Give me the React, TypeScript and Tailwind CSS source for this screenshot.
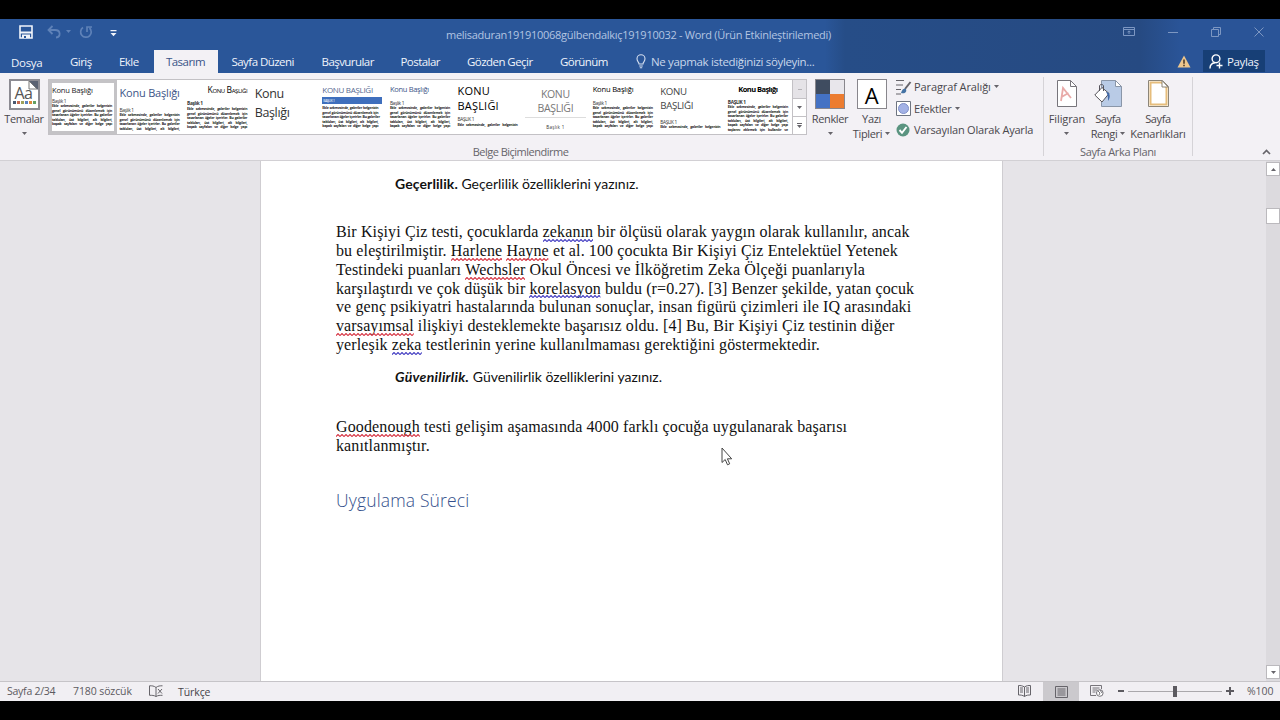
import { ReactNode } from "react";

const SAMPLE = [
  "Ekle sekmesinde, galeriler belgenizin",
  "genel görünümünü düzenlemek için",
  "tasarlanan öğeler içerirler. Bu galeriler",
  "tabloları, üst bilgileri, alt bilgileri,",
  "kapak sayfaları ve diğer belge yapı",
  "taşlarını eklemek için kullanılır ve",
];

const tabs = [
  { label: "Dosya", className: "w-[70px] pl-[11px] pt-px tracking-[-0.3px]" },
  { label: "Giriş", className: "w-[49px]" },
  { label: "Ekle", className: "w-[35px]" },
  { label: "Tasarım", className: "w-[64px] pl-3 mr-[13.5px] bg-[#f3f1f5] text-[#3a5488]" },
  { label: "Sayfa Düzeni", className: "w-[90px]" },
  { label: "Başvurular", className: "w-[79px]" },
  { label: "Postalar", className: "w-[66.5px]" },
  { label: "Gözden Geçir", className: "w-[93px]" },
  { label: "Görünüm", className: "w-[76px]" },
];

function Caret({ className = "" }: { className?: string }) {
  return (
    <svg viewBox="0 0 5 3" className={`h-[3px] w-[5px] shrink-0 ${className}`}>
      <path d="M0 0h5L2.500 3z" fill="#66646a" />
    </svg>
  );
}

function Lines({ count, className = "" }: { count: number; className?: string }) {
  return (
    <div className={`text-[3.500px] font-bold leading-[4.500px] tracking-[-0.25px] whitespace-nowrap text-[#222] ${className}`}>
      {SAMPLE.slice(0, count).map((line) => (
        <div key={line} className="[text-align-last:justify]">{line}</div>
      ))}
    </div>
  );
}

function Thumb({ title, heading, titleClass, headingClass = "", lines = 0, bodyClass = "" }: {
  title: ReactNode;
  heading?: string;
  titleClass: string;
  headingClass?: string;
  lines?: number;
  bodyClass?: string;
}) {
  return (
    <div className="w-[67.6px] shrink-0 pl-[3.500px] pr-1">
      <div className={`whitespace-nowrap ${titleClass}`}>{title}</div>
      {heading && <div className={`whitespace-nowrap text-[4.800px] leading-[6px] text-[#333] ${headingClass}`}>{heading}</div>}
      <Lines count={lines} className={bodyClass} />
    </div>
  );
}

function Gallery() {
  return (
    <div className="flex h-[56px] w-[759px] border border-[#c3c1c5] bg-white">
      <div className="-mr-px h-[54px] w-[68px] shrink-0 border-[3px] border-[#c4c3c6] pt-px">
        <div className="-ml-[3.500px]">
          <Thumb title="Konu Başlığı" heading="Başlık 1" titleClass="h-[14px] text-[7.600px] leading-[13px] tracking-[-0.2px] text-[#222]" lines={5} />
        </div>
      </div>
      <div className="flex pt-[3px]">
        <Thumb title="Konu Başlığı" heading="Başlık 1" titleClass="h-[24px] text-[11px] leading-[20px] tracking-[-0.2px] text-[#3d5688]" headingClass="text-[#3d5688]" lines={4} />
        <Thumb title="Konu Başlığı" heading="Başlık 1" titleClass="h-[17px] text-right text-[8.500px] leading-[14px] tracking-[-0.4px] [font-variant:small-caps] text-black" headingClass="font-bold" lines={5} bodyClass="pt-px" />
        <Thumb title={<>Konu<br />Başlığı</>} titleClass="pt-[2px] text-[12.500px] leading-[18.500px] text-[#333]" />
        <div className="w-[67.6px] pr-1 pl-[3.500px]">
          <div className="h-[14px] text-[8px] leading-[13px] tracking-[-0.3px] whitespace-nowrap text-[#56698f]">KONU BAŞLIĞI</div>
          <div className="mb-[2px] h-[7px] w-[60px] bg-[#3f6fbd] pl-px text-[3.500px] leading-[7px] text-white">BAŞLIK 1</div>
          <Lines count={5} className="pr-1" />
        </div>
        <Thumb title="Konu Başlığı" heading="Başlık 1" titleClass="h-[17px] text-[7.500px] leading-[13px] tracking-[-0.3px] text-[#3d5688]" lines={5} />
        <Thumb title={<>KONU<br />BAŞLIĞI</>} heading="BAŞLIK 1" titleClass="h-[33px] pt-px text-[11px] leading-[14.500px] tracking-[0.2px] text-black" lines={1} bodyClass="pt-px" />
        <div className="w-[67.6px] pt-1 text-center">
          <div className="text-[10.500px] leading-[14px] text-[#777]">KONU<br />BAŞLIĞI</div>
          <div className="mx-[3px] mt-[2px] border-t border-[#ddd] pt-[7px] text-[4.500px] leading-[5px] tracking-[0.3px] text-[#333]">Başlık 1</div>
        </div>
        <Thumb title="Konu Başlığı" heading="Başlık 1" titleClass="h-[17px] text-[7.600px] leading-[13px] tracking-[-0.2px] text-black" lines={5} />
        <Thumb title={<>KONU<br />BAŞLIĞI</>} heading="BAŞLIK 1" titleClass="h-[36px] pt-[2px] text-[9.700px] leading-[14px] text-[#444]" lines={1} />
        <Thumb title="Konu Başlığı" heading="BAŞLIK 1" titleClass="h-[16px] text-center text-[7.500px] font-bold leading-[12px] tracking-[-0.55px] text-black" headingClass="text-[4.200px] font-bold" lines={6} />
      </div>
      <div className="ml-auto flex w-[14px] shrink-0 flex-col border-l border-[#c3c1c5]">
        <div className="flex h-[19px] items-center justify-center border-b border-[#c3c1c5] bg-[#e5e3e7]">
          <div className="h-px w-1 bg-[#b5b3b7]" />
        </div>
        <div className="flex h-[18px] items-center justify-center border-b border-[#c3c1c5]">
          <Caret />
        </div>
        <div className="flex flex-1 flex-col items-center justify-center gap-px">
          <div className="h-px w-[5px] bg-[#66646a]" />
          <Caret />
        </div>
      </div>
    </div>
  );
}

function TitleBar() {
  return (
    <div className="flex h-[31px] items-center text-white">
      <svg viewBox="0 0 14 14" className="mb-[5px] ml-[19px] h-[14px] w-[14px]">
        <path d="M1 1h12v12H1z" fill="none" stroke="#f1f4fa" strokeWidth="1.600" />
        <path d="M1 6.500h12v2H1zM3 9.500h8V13H3z" fill="#f1f4fa" />
        <path d="M5 11h2v2H5z" fill="#2a5699" />
      </svg>
      <svg viewBox="0 0 14 14" className="mb-[6px] ml-[14px] h-[14px] w-[14px]" fill="none" stroke="#5f82b8" strokeWidth="1.800">
        <path d="M5.500 1L1.500 5l4 4M1.500 5H8c6 0 6 7 1 7.500" />
      </svg>
      <svg viewBox="0 0 5 3" className="mb-[6px] ml-[5px] h-[3px] w-[5px]"><path d="M0 0h5L2.500 3z" fill="#5f82b8" /></svg>
      <svg viewBox="0 0 14 14" className="mb-[6px] ml-[8px] h-[14px] w-[14px]" fill="none" stroke="#5f82b8" strokeWidth="1.700">
        <path d="M4 2.500A5.300 5.300 0 1 0 10.500 3M8 7V2h5" />
      </svg>
      <svg viewBox="0 0 7 7" className="mb-[3px] ml-[17px] h-[7px] w-[7px]"><path d="M.5 0h6v1.300h-6zM.5 3h6l-3 3.300z" fill="#f1f4fa" /></svg>
      <div className="ml-[329px] w-[386px] text-[11px] leading-4 tracking-[-0.28px] whitespace-nowrap text-[#b3c5e2]">
        melisaduran191910068gülbendalkıç191910032 - Word (Ürün Etkinleştirilemedi)
      </div>
      <svg viewBox="0 0 142 12" className="mb-[5px] ml-[291px] h-3 w-[142px]" fill="none" stroke="#7d97c2">
        <path d="M.5 1.500h11v8H.5zM.5 3.500h11M6 8V5M4.500 6.300L6 4.800l1.500 1.500M45 6.500h10M88.500 3.500h7v7h-7zM90.500 3.500v-2h7v7h-2M131.500 1.500l9 9M140.500 1.500l-9 9" />
      </svg>
    </div>
  );
}

function TabBar() {
  return (
    <div className="flex h-[23px] text-[11.500px] leading-[23px] tracking-[-0.55px] whitespace-nowrap text-[#f0f4fb]">
      {tabs.map((tab) => (
        <div key={tab.label} className={`shrink-0 ${tab.className}`}>{tab.label}</div>
      ))}
      <svg viewBox="0 0 10 15" className="mt-[4px] h-[15px] w-[10px]" fill="none" stroke="#d5dff0" strokeWidth="1.100">
        <path d="M3 10C3 8 1 7.500 1 4.800a4 4 0 0 1 8 0C9 7.500 7 8 7 10zM3.200 12h3.600M3.800 13.700h2.400" />
      </svg>
      <div className="ml-[5px] w-[526px] tracking-[-0.34px] text-[#c9d6eb]">Ne yapmak istediğinizi söyleyin...</div>
      <svg viewBox="0 0 14 13" className="mt-[5px] h-[13px] w-[14px]">
        <path d="M7 .5l6.500 12H.5z" fill="#edc68d" />
        <path d="M6.200 4.500h1.600v4.300H6.200zM6.200 9.800h1.600v1.500H6.200z" fill="#4c3b2a" />
      </svg>
      <div className="ml-3 flex h-[22px] w-[62px] gap-1 bg-[#173f76] pl-[6px]">
        <svg viewBox="0 0 14 15" className="mt-[4px] h-[15px] w-[14px]" fill="none" stroke="#fff" strokeWidth="1.400">
          <circle cx="7" cy="4.800" r="3.900" />
          <path d="M1 14.500c0-3.500 2-5.500 5-5.800M10.500 8.500v6M7.500 11.500h6" />
        </svg>
        <span className="font-medium tracking-[-0.35px]">Paylaş</span>
      </div>
    </div>
  );
}

function BigButton({ icon, className, children }: { icon: ReactNode; className: string; children: ReactNode }) {
  return (
    <div className={`flex shrink-0 flex-col items-center text-center whitespace-nowrap ${className}`}>
      <div className="flex h-[31px] items-start">{icon}</div>
      <div className="flex flex-col items-center pt-px leading-[15px]">{children}</div>
    </div>
  );
}

function Ribbon() {
  return (
    <div className="flex h-[88px] border-b border-[#d2d0d4] bg-[#f3f1f5] text-[11px] tracking-[-0.35px] text-[#4a484d]">
      <div className="w-[1043px] pt-[6px]">
        <div className="flex h-[65px]">
          <BigButton
            className="w-12"
            icon={
              <svg viewBox="0 0 31 31" className="h-[31px] w-[31px]">
                <path d="M1 1h29v29H1z" fill="#fff" stroke="#8c8b92" strokeWidth="2" />
                <path d="M20 2l9 9V2z" fill="#5b6272" />
                <path d="M20 2v8h8z" fill="#fff" stroke="#777" />
                <text x="5.500" y="20" fontSize="16" textLength="18" fill="#555" fontFamily="Open Sans">Aa</text>
                <path d="M4 22h3v3H4z" fill="#4a5a70" /><path d="M8 22h3v3H8z" fill="#c46a50" /><path d="M12 22h3v3h-3z" fill="#9fa25a" />
                <path d="M16 22h3v3h-3z" fill="#5b82c0" /><path d="M20 22h3v3h-3z" fill="#dd8a3a" /><path d="M24 22h3v3h-3z" fill="#65a064" />
              </svg>
            }
          >
            Temalar
            <Caret className="mt-[6px]" />
          </BigButton>
          <Gallery />
          <BigButton
            className="ml-1 w-[38px]"
            icon={
              <div className="grid h-[30px] w-[30px] grid-cols-2 border border-[#88868c]">
                <div className="bg-[#3f4c60]" /><div className="bg-[#e8e6eb]" />
                <div className="bg-[#4472c4]" /><div className="bg-[#ec7c30]" />
              </div>
            }
          >
            Renkler
            <Caret className="mt-[6px]" />
          </BigButton>
          <BigButton
            className="ml-[3px] w-[39px]"
            icon={
              <div className="flex h-[30px] w-[30px] items-center justify-center border border-[#88868c] bg-white pt-[2px] text-[22px] leading-none text-black">A</div>
            }
          >
            Yazı
            <span className="flex items-center gap-[3px]">Tipleri <Caret /></span>
          </BigButton>
          <div className="ml-[5px] flex flex-col leading-[21.500px] tracking-[-0.2px] whitespace-nowrap">
            <div className="-mt-[3px] flex items-center gap-[3px] tracking-[-0.1px]">
              <svg viewBox="0 0 16 16" className="-mr-px h-4 w-4">
                <path d="M0 1.500h8M0 6h7M0 10.500h5M0 15h5" stroke="#66646a" />
                <path d="M14.500 3L9 10" stroke="#66646a" strokeWidth="2" />
                <path d="M5 14c1-4 3-5 5-4 1 3-1 5-5 4z" fill="#4472a4" />
              </svg>
              Paragraf Aralığı <Caret />
            </div>
            <div className="flex items-center gap-[3px]">
              <svg viewBox="0 0 15 15" className="h-[15px] w-[15px]">
                <path d="M.5.5h14v14H.5z" fill="#fff" stroke="#6e7480" />
                <circle cx="7.500" cy="7.500" r="5" fill="#a3b2e6" stroke="#7f8fc8" />
              </svg>
              Efektler <Caret />
            </div>
            <div className="flex items-center gap-1">
              <svg viewBox="0 0 14 14" className="h-[14px] w-[14px]">
                <circle cx="7" cy="7" r="6.500" fill="#5a9480" />
                <path d="M3.500 7l2.500 2.800L10.500 4" fill="none" stroke="#fff" strokeWidth="1.900" />
              </svg>
              Varsayılan Olarak Ayarla
            </div>
          </div>
        </div>
        <div className="w-[1041px] text-center leading-4 tracking-[-0.5px] text-[#66646a]">Belge Biçimlendirme</div>
      </div>
      <div className="my-1 w-[150px] border-x border-[#d5d3d7] pt-[2px]">
        <div className="flex h-[65px]">
          <BigButton
            className="ml-[4px] w-[38px] tracking-[-0.1px]"
            icon={
              <svg viewBox="0 0 20 28" className="mt-px h-7 w-5">
                <path d="M.5.5h13l6 6v20H.5z" fill="#fff" stroke="#77757b" />
                <path d="M13.500.5v6h6" fill="none" stroke="#77757b" />
                <path d="M4 21L6 8l8 10M4.500 17l7-4" fill="none" stroke="#e8aaa8" strokeWidth="1.800" />
              </svg>
            }
          >
            Filigran
            <Caret className="mt-[6px]" />
          </BigButton>
          <BigButton
            className="ml-[3px] w-[38px]"
            icon={
              <svg viewBox="0 0 28 28" className="mt-px h-7 w-7">
                <path d="M7.500.5h14l6 6v20h-20z" fill="#b9cbe6" stroke="#8a96a8" />
                <path d="M21.500.5v6h6z" fill="#fff" stroke="#8a96a8" />
                <path d="M.8 15L8 7.500l7 6L8 22z" fill="#fff" stroke="#55535a" />
                <path d="M5.500 11V6c0-2 4-2 4 0v5" fill="none" stroke="#55535a" />
                <path d="M12 12c4 0 5 5 2 9 0-4 0-6-2-9z" fill="#3f68a8" />
              </svg>
            }
          >
            Sayfa
            <span className="flex items-center gap-[3px]">Rengi <Caret /></span>
          </BigButton>
          <BigButton
            className="ml-[3px] w-[56px]"
            icon={
              <svg viewBox="0 0 21 28" className="mt-px h-7 w-[21px]">
                <path d="M.5.5h14l6 6v20H.5z" fill="#fff" stroke="#8c8578" />
                <path d="M2.500 2.500h11l5 5v17h-16z" fill="none" stroke="#e6bd7c" strokeWidth="2" />
                <path d="M14 .5v6.500h6z" fill="#fff" stroke="#8c8578" />
              </svg>
            }
          >
            Sayfa
            <span className="tracking-[-0.2px]">Kenarlıkları</span>
          </BigButton>
        </div>
        <div className="text-center leading-4 text-[#66646a]">Sayfa Arka Planı</div>
      </div>
      <svg viewBox="0 0 9 6" className="mt-auto mb-[5px] ml-[69px] h-[6px] w-[9px]" fill="none" stroke="#66646a" strokeWidth="1.700">
        <path d="M1 5l3.500-3.500L8 5" />
      </svg>
    </div>
  );
}

function Wavy({ children, blue = false }: { children: ReactNode; blue?: boolean }) {
  return (
    <span className="relative inline-block">
      {children}
      <svg className={`absolute bottom-0 left-0 h-[3px] w-full ${blue ? "text-[#4a44c4]" : "text-[#d83c4a]"}`}>
        <defs>
          <pattern id={blue ? "wave-blue" : "wave-red"} width="4" height="3" patternUnits="userSpaceOnUse">
            <path d="M-1 3.500L2 .5l3 3" fill="none" stroke="currentColor" strokeWidth="1.200" />
          </pattern>
        </defs>
        <rect width="100%" height="3" fill={blue ? "url(#wave-blue)" : "url(#wave-red)"} />
      </svg>
    </span>
  );
}

function Page() {
  return (
    <div className="w-[743px] border-x border-[#cfcdd1] bg-white pt-[14px] pl-[75px] font-['Liberation_Serif',serif] text-[16px] leading-[18.800px] tracking-[0.12px] whitespace-nowrap text-[#111]">
      <p className="pl-[59px] font-['Lato',sans-serif] text-[14px] tracking-normal"><b className="tracking-[0.1px]">Geçerlilik.</b> Geçerlilik özelliklerini yazınız.</p>
      <div className="mt-[29.500px]">
        <p>Bir Kişiyi Çiz testi, çocuklarda <Wavy blue>zekanın</Wavy> bir ölçüsü olarak yaygın olarak kullanılır, ancak</p>
        <p>bu eleştirilmiştir. <Wavy>Harlene</Wavy> <Wavy>Hayne</Wavy> et al. 100 çocukta Bir Kişiyi Çiz Entelektüel Yetenek</p>
        <p>Testindeki puanları <Wavy>Wechsler</Wavy> Okul Öncesi ve İlköğretim Zeka Ölçeği puanlarıyla</p>
        <p>karşılaştırdı ve çok düşük bir <Wavy blue>korelasyon</Wavy> buldu (r=0.27). [3] Benzer şekilde, yatan çocuk</p>
        <p>ve genç psikiyatri hastalarında bulunan sonuçlar, insan figürü çizimleri ile IQ arasındaki</p>
        <p><Wavy>varsayımsal</Wavy> ilişkiyi desteklemekte başarısız oldu. [4] Bu, Bir Kişiyi Çiz testinin diğer</p>
        <p>yerleşik <Wavy blue>zeka</Wavy> testlerinin yerine kullanılmaması gerektiğini göstermektedir.</p>
      </div>
      <p className="mt-[13.500px] pl-[59px] font-['Lato',sans-serif] text-[14px] tracking-normal"><b className="tracking-[0.3px]"><i>Güvenilirlik.</i></b> Güvenilirlik özelliklerini yazınız.</p>
      <div className="mt-[31px]">
        <p><Wavy>Goodenough</Wavy> testi gelişim aşamasında 4000 farklı çocuğa uygulanarak başarısı</p>
        <p>kanıtlanmıştır.</p>
      </div>
      <h1 className="mt-[32px] font-['Open_Sans',sans-serif] text-[17.500px] font-light leading-6 tracking-[0.15px] text-[#34508c]">Uygulama Süreci</h1>
    </div>
  );
}

function StatusBar() {
  return (
    <div className="flex h-5 items-center border-t border-[#c6c4c8] bg-[#f1eff3] pb-px text-[10.500px] leading-[18px] tracking-[-0.1px] whitespace-nowrap text-[#5c5a60]">
      <span className="w-[66px] pl-[7px] tracking-[-0.25px]">Sayfa 2/34</span>
      <span className="ml-[7px] w-[76px]">7180 sözcük</span>
      <svg viewBox="0 0 15 12" className="h-3 w-[15px]" fill="none" stroke="#66646a">
        <path d="M7 2.500C5 .8 3 .8.5.8v9.500c2.500 0 4.500 0 6.500 1.200zM7 2.500C9 .8 11 .8 13.500.8M7 11.500c2-1.200 4-1.200 6.500-1.200M9 4l4 4.500M13 4L9 8.500" />
      </svg>
      <span className="ml-[14px] pt-px text-[#45434a]">Türkçe</span>
      <svg viewBox="0 0 13 12" className="ml-auto h-3 w-[13px]" fill="none" stroke="#66646a">
        <path d="M6.500 2C4 .5 2.500.5.5.5v9.500c2 0 4 0 6 1.500C8.500 10 10.500 10 12.500 10V.5c-2 0-4 0-6 1.500v9.500M2 3h3M2 5h3M2 7h3M8 3h3M8 5h3M8 7h3" />
      </svg>
      <div className="ml-3 flex h-[19px] w-9 items-center justify-center self-start bg-[#cbc9cd]">
        <svg viewBox="0 0 13 12" className="h-3 w-[13px]" fill="none" stroke="#66646a">
          <path d="M.5.5h12v11H.5zM2.500 3h8M2.500 5h8M2.500 7h8M2.500 9h8" />
        </svg>
      </div>
      <svg viewBox="0 0 14 12" className="ml-[11px] h-3 w-[14px]" fill="none" stroke="#77757b">
        <path d="M6 10.500H.5V.5h11V4M2.500 3h7M2.500 5h5M2.500 7h3" />
        <circle cx="9.800" cy="8" r="3.300" fill="#fff" />
        <path d="M8 6l2 2-1 2M10 5l2 3" />
      </svg>
      <div className="ml-[14px] h-[2px] w-[6px] bg-[#5c5a60]" />
      <div className="ml-1 flex w-[94px] items-center">
        <div className="h-px w-[45px] bg-[#aaa8ac]" />
        <div className="h-[11px] w-1 bg-[#5c5a60]" />
        <div className="h-px w-[45px] bg-[#aaa8ac]" />
      </div>
      <svg viewBox="0 0 8 8" className="ml-1 h-2 w-2"><path d="M3 0h2v3h3v2H5v3H3V5H0V3h3z" fill="#5c5a60" /></svg>
      <span className="ml-[13px] w-[33px]">%100</span>
    </div>
  );
}

export default function App() {
  return (
    <div className="relative h-[720px] w-[1280px] overflow-hidden bg-black py-[19px] font-['Open_Sans',sans-serif]">
      <div className="h-[54px] bg-[linear-gradient(90deg,#2a5699_825px,#264d87_845px,#264a82_1140px,#2a5497_1180px)]">
        <TitleBar />
        <TabBar />
      </div>
      <Ribbon />
      <div className="flex h-[520px] bg-[#e6e4e8] pl-[260px]">
        <Page />
        <div className="ml-auto flex w-[14px] flex-col bg-[#dcdade] pt-px">
          <div className="flex h-[14px] items-center justify-center border border-[#bbb9bd] bg-white">
            <Caret className="rotate-180" />
          </div>
          <div className="mt-8 h-4 border border-[#bbb9bd] bg-white" />
          <div className="mt-auto mb-[2px] flex h-[14px] items-center justify-center border border-[#bbb9bd] bg-white">
            <Caret />
          </div>
        </div>
      </div>
      <StatusBar />
      <svg viewBox="0 0 12 19" className="absolute top-[447px] left-[721px] h-[19px] w-3">
        <path d="M1 1v14.500l3.200-3 2.300 5.300 2.200-1-2.300-5h4.300z" fill="#fff" stroke="#444" />
      </svg>
    </div>
  );
}
